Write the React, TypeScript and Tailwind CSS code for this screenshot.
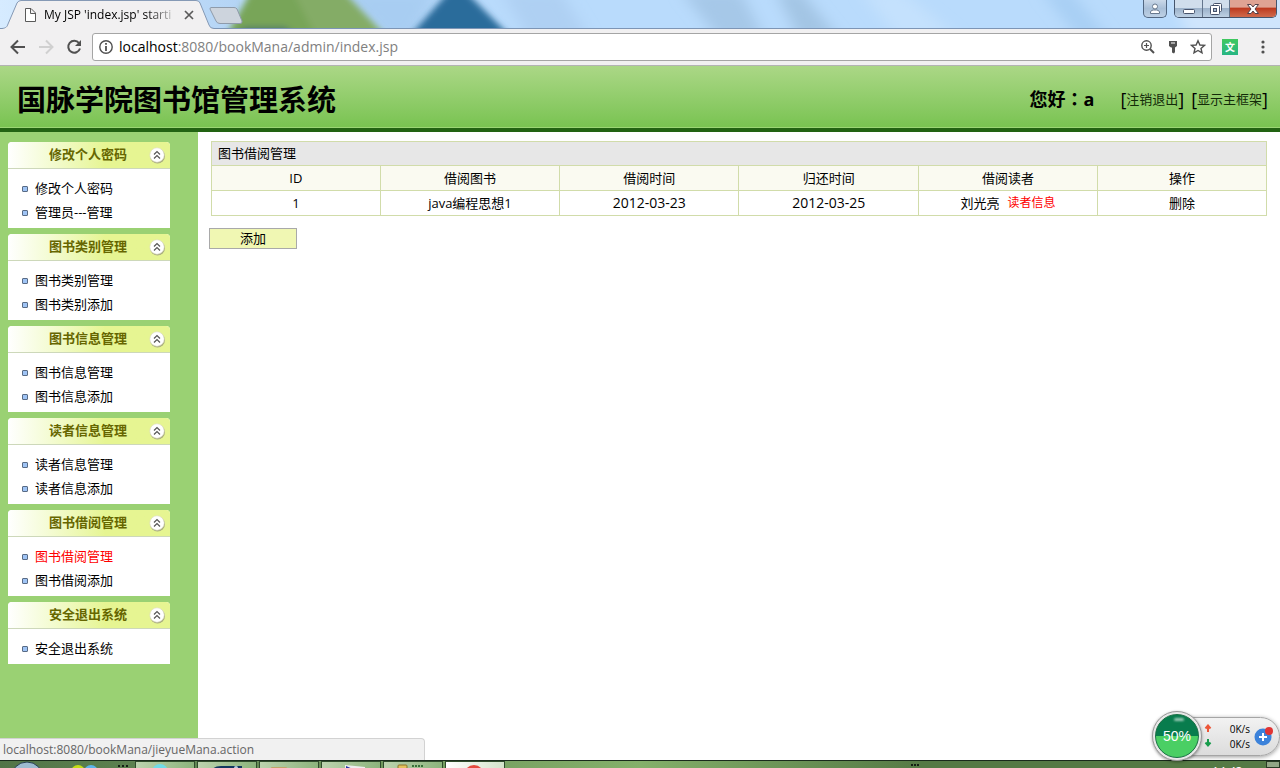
import { MouseEvent, ReactNode } from "react";

const groups = [
  { title: "修改个人密码", items: ["修改个人密码", "管理员---管理"] },
  { title: "图书类别管理", items: ["图书类别管理", "图书类别添加"] },
  { title: "图书信息管理", items: ["图书信息管理", "图书信息添加"] },
  { title: "读者信息管理", items: ["读者信息管理", "读者信息添加"] },
  { title: "图书借阅管理", items: ["图书借阅管理", "图书借阅添加"], active: 0 },
  { title: "安全退出系统", items: ["安全退出系统"] },
];

const stay = (e: MouseEvent) => e.preventDefault();

function Link({ children, className }: { children: ReactNode; className?: string }) {
  return (
    <a href="#" onClick={stay} className={className}>
      {children}
    </a>
  );
}

function TabStrip() {
  return (
    <div className="relative h-[29px] shrink-0 overflow-hidden bg-[#b9dbfc]">
      <svg className="absolute inset-0 h-full w-full" preserveAspectRatio="xMinYMin slice" aria-hidden="true">
        <defs>
          <filter id="soft" x="-40%" y="-50%" width="180%" height="200%">
            <feGaussianBlur stdDeviation="7" />
          </filter>
          <filter id="soft2" x="-20%" y="-50%" width="140%" height="200%">
            <feGaussianBlur stdDeviation="3" />
          </filter>
          <linearGradient id="leftglow" x1="0" x2="1">
            <stop offset="0" stopColor="#d6ebff" />
            <stop offset="1" stopColor="#b4d4f5" />
          </linearGradient>
        </defs>
        <rect width="240" height="29" fill="url(#leftglow)" />
        <g filter="url(#soft)">
          <path d="M330-10H440L410 40H390Z" fill="#a8cdf2" />
          <path d="M680-10H740L765 40H720Z" fill="#a6c8e8" />
          <path d="M775-10H800L840 40H800Z" fill="#a3c5e4" />
          <path d="M500-10H560L590 40H530Z" fill="#afd0f3" />
          <path d="M860-10H900L960 40H900Z" fill="#c4e1fd" />
          <path d="M1040-10H1070L1110 40H1080Z" fill="#a8cff4" />
          <path d="M1170-10H1300V40H1190Z" fill="#cfe5fc" />
        </g>
        <g filter="url(#soft2)">
          <path d="M252-10H342L390 40H224Z" fill="#84ac66" />
          <path d="M252-10H292L318 40H224Z" fill="#78a558" />
          <path d="M236 32L246 27H285L292 32V36H236Z" fill="#4f7866" />
          <path d="M452-12L408 38H512L462-12Z" fill="#2a6c9b" />
        </g>
      </svg>
      <div className="absolute inset-x-0 bottom-0 h-px bg-[#7d95b5]" />
      <svg className="absolute left-0 top-0" width="250" height="29" aria-hidden="true">
        <path d="M2 28.5C6 28 7 27 8 24L17 3Q18.500 .500 21 .500H196Q199 .500 200 3L209 25Q210 28.500 214 28.500V30H2Z" fill="#f1f0f1" stroke="#8599b5" />
        <rect x="5" y="28" width="206" height="1" fill="#f1f0f1" />
        <path d="M211 7.500H234Q236 7.500 237 9L242 21Q242.500 23.500 240 23.500H220Q217 23.500 216 21L210 9Q210 7.500 211 7.500Z" fill="#cdd4dd" stroke="#8f9baa" />
        <path d="M25.500 8.500H31L35.500 13V21.500H25.500ZM30.500 8.500V13.500H35.500" fill="#fff" stroke="#5a5a5a" />
        <path d="M185 11L193 19M193 11L185 19" stroke="#5a5a5a" strokeWidth="1.700" />
      </svg>
      <div className="absolute left-11 top-1.5 w-[135px] whitespace-nowrap bg-linear-to-r from-black from-75% to-transparent bg-clip-text text-[12px] leading-[18px] text-transparent">
        My JSP 'index.jsp' starti
      </div>
      <div className="absolute right-[3px] top-0 flex gap-[7px]">
        <button aria-label="用户" className="flex h-[18px] w-6 items-center justify-center rounded-b-[5px] border border-t-0 border-[#526781] bg-linear-to-b from-[#cbd9e9] via-[#a9bfd7] to-[#bed1e5]">
          <svg width="12" height="12" viewBox="0 0 12 12" fill="#fff" stroke="#68798e"><circle cx="6" cy="3.500" r="2.500" /><path d="M1.500 10.500V9Q2 7 4.500 7H7.500Q10 7 10.500 9V10.500Z" /></svg>
        </button>
        <div className="flex h-[18px] overflow-hidden rounded-b-[5px] border border-t-0 border-[#45556c]">
          <button aria-label="最小化" className="flex w-7 items-center justify-center border-r border-[#63758c] bg-linear-to-b from-[#d0deec] from-45% via-[#9cb2ca] via-50% to-[#bdd0e3]">
            <svg width="14" height="14"><rect x="1.500" y="7.500" width="11" height="4" rx="1" fill="#fff" stroke="#47536b" /></svg>
          </button>
          <button aria-label="还原" className="flex w-[27px] items-center justify-center border-r border-[#63758c] bg-linear-to-b from-[#d0deec] from-45% via-[#9cb2ca] via-50% to-[#bdd0e3]">
            <svg width="14" height="14" fill="#fff" stroke="#47536b"><rect x="4.500" y="1.500" width="8" height="8" rx="1" /><rect x="1.500" y="3.500" width="9" height="9" rx="1" /><rect x="4.500" y="6.500" width="3" height="3" fill="#a9bbd0" /></svg>
          </button>
          <button aria-label="关闭" className="flex w-[46px] items-center justify-center bg-linear-to-b from-[#dfa393] from-40% via-[#bd3b20] via-50% to-[#d06a4c]">
            <svg width="14" height="14"><path d="M1.500 2.500H5L7 5L9 2.500H12.500L9 7L12.500 11.500H9L7 9L5 11.500H1.500L5 7Z" fill="#fff" stroke="#524049" /></svg>
          </button>
        </div>
      </div>
    </div>
  );
}

function Toolbar() {
  return (
    <div className="flex h-[37px] shrink-0 items-center border-b border-[#b3b3b3] bg-[#f1f0f1] pl-2.5 pr-2 pb-px">
      <div className="flex items-center gap-3">
        <button aria-label="后退"><svg width="16" height="16" fill="none" stroke="#505050" strokeWidth="2"><path d="M15 8H2M8 1.500L1.500 8L8 14.500" /></svg></button>
        <button aria-label="前进"><svg width="16" height="16" fill="none" stroke="#d0d0d0" strokeWidth="2"><path d="M1 8H14M8 1.500L14.500 8L8 14.500" /></svg></button>
        <button aria-label="重新加载"><svg width="16" height="16" fill="none" stroke="#505050" strokeWidth="2"><path d="M13 4A6 6 0 1 0 14 9.500" /><path d="M15 1V7H9Z" fill="#505050" stroke="none" /></svg></button>
      </div>
      <div className="ml-2.5 flex h-7 flex-1 items-center rounded-[3px] border border-[#a5a5a5] bg-white pl-1.5 pr-[5px]">
        <svg className="shrink-0" width="14" height="14" fill="none" stroke="#505050"><circle cx="7" cy="7" r="6.200" strokeWidth="1.400" /><path d="M7 6V11M7 3V4.800" strokeWidth="1.800" /></svg>
        <div className="ml-1.5 flex-1 text-[14px] leading-5 text-[#808080]">
          <span className="text-black">localhost</span>:8080/bookMana/admin/index.jsp
        </div>
        <div className="flex items-center gap-[10px]">
          <button aria-label="缩放"><svg width="16" height="16" fill="none" stroke="#505050" strokeWidth="1.400"><circle cx="6.500" cy="6.500" r="4.700" /><path d="M10 10L14 14" strokeWidth="2" /><path d="M4 6.500H9M6.500 4V9" strokeWidth="1.200" /></svg></button>
          <button aria-label="密钥"><svg width="14" height="14" fill="#505050"><path d="M3 1H11V6L9 7.500V12L8 13.500L6 12.500V7.500H5L3 6Z" /><rect x="5" y="2.500" width="4" height="1" fill="#fff" /></svg></button>
          <button aria-label="收藏"><svg width="16" height="16" viewBox="0 0 16 16" fill="none" stroke="#505050" strokeWidth="1.400"><path d="M8 1.800L9.900 6L14.400 6.400L11 9.400L12 13.800L8 11.500L4 13.800L5 9.400L1.600 6.400L6.100 6Z" /></svg></button>
        </div>
      </div>
      <button className="ml-2.5 flex size-4 items-center justify-center bg-linear-to-b from-[#3fc85e] to-[#27b583] text-[10px] font-bold leading-4 text-white">文</button>
      <button aria-label="菜单" className="ml-[22px]"><svg width="6" height="14" fill="#505050"><circle cx="3" cy="2" r="1.600" /><circle cx="3" cy="7" r="1.600" /><circle cx="3" cy="12" r="1.600" /></svg></button>
      <span className="w-1.5" />
    </div>
  );
}

function Header() {
  return (
    <header className="flex h-[66px] shrink-0 items-center justify-between border-b-4 border-[#226312] bg-linear-to-b from-[#abd786] to-[#78c350] pl-[17px] pr-3 shadow-[inset_0_-1px_0_#9bd574]">
      <h1 className="mt-1.5 text-[29px] font-bold leading-10">国脉学院图书馆管理系统</h1>
      <div className="mt-1 flex items-center whitespace-nowrap">
        <span className="mr-[26px] font-['Open_Sans','Noto_Sans_CJK_TC',sans-serif] text-[18px] font-bold">您好：a</span>
        <span className="mr-[7px] flex items-center text-[18px]">[<Link className="mt-0.5 text-[13px] text-[#132b08]">注销退出</Link>]</span>
        <span className="flex items-center text-[18px]">[<Link className="mt-0.5 text-[13px] text-[#132b08]">显示主框架</Link>]</span>
      </div>
    </header>
  );
}

function Sidebar() {
  return (
    <nav className="flex w-[198px] shrink-0 flex-col gap-1.5 bg-[#9ad173] pl-2 pr-7 pt-2.5">
      {groups.map((g) => (
        <section key={g.title} className="rounded-t-[4px] bg-white pb-[3px]">
          <h2 className="mb-[7px] flex h-[27px] items-center rounded-t-[4px] border-b border-[#cdd8ba] bg-linear-to-r from-white to-[#e6f592] to-60% pl-[41px] pr-1 text-[13px] font-bold text-[#666600]">
            <span className="flex-1">{g.title}</span>
            <button aria-label="折叠">
              <svg width="18" height="18">
                <circle cx="9.500" cy="10" r="7.500" fill="#a9ad80" />
                <circle cx="9" cy="9" r="7.200" fill="#fff" stroke="#dddcc4" strokeWidth=".600" />
                <path d="M6 8.500L9 5.500L12 8.500M6 12.500L9 9.500L12 12.500" fill="none" stroke="#555" strokeWidth="1.200" />
              </svg>
            </button>
          </h2>
          <ul className="pt-px">
            {g.items.map((item, i) => (
              <li key={item} className="flex h-6 items-center gap-[7px] pl-3.5 text-[13px]">
                <span className="size-1.5 rounded-[1px] border border-[#596b85] bg-[#9fc4f5]" />
                <Link className={g.active === i ? "text-[#ff0000]" : "text-black"}>{item}</Link>
              </li>
            ))}
          </ul>
        </section>
      ))}
    </nav>
  );
}

function Content() {
  const cell = "border border-[#d1dcaa] p-0 font-normal";
  return (
    <main className="min-w-0 flex-1 bg-white pl-[11px] pr-[13px] pt-[9px]">
      <div className="pl-0.5">
        <table className="w-full table-fixed border-collapse text-center text-[13px] leading-6">
          <colgroup>
            <col className="w-[16%]" />
            <col className="w-[17%]" />
            <col className="w-[17%]" />
            <col className="w-[17%]" />
            <col className="w-[17%]" />
            <col className="w-[16%]" />
          </colgroup>
          <tbody>
            <tr className="h-6 bg-[#e7e7e7]">
              <td colSpan={6} className={`${cell} pl-1.5! text-left leading-[23px]!`}>图书借阅管理</td>
            </tr>
            <tr className="h-[25px] bg-[#fafaf1]">
              {["ID", "借阅图书", "借阅时间", "归还时间", "借阅读者", "操作"].map((h) => (
                <th key={h} scope="col" className={cell}>{h}</th>
              ))}
            </tr>
            <tr className="h-[25px]">
              <td className={cell}>1</td>
              <td className={cell}>java编程思想1</td>
              <td className={`${cell} text-[14px]`}>2012-03-23</td>
              <td className={`${cell} text-[14px]`}>2012-03-25</td>
              <td className={cell}>
                <span className="inline-flex items-center gap-2">
                  刘光亮 <Link className="text-[12px] text-[#ff0000]">读者信息</Link>
                </span>
              </td>
              <td className={cell}><Link>删除</Link></td>
            </tr>
          </tbody>
        </table>
      </div>
      <button className="mt-3 flex h-[21px] w-[88px] items-center justify-center border border-[#a9a9a9] bg-[#f0f7b3] text-[13px]">添加</button>
    </main>
  );
}

function SpeedWidget() {
  return (
    <div className="absolute bottom-[7px] right-0 flex h-[50px] w-[128px] items-center">
      <div className="absolute right-0 h-[39px] w-[100px] rounded-r-full border border-[#a5a5a5] bg-linear-to-b from-[#f2f2f2] to-[#dcdcdc] shadow-[0_1px_4px_#0006]" />
      <div className="relative flex size-[50px] shrink-0 items-center justify-center rounded-full border border-[#999] bg-[#e8e8e8] shadow-[0_1px_3px_#0006]">
        <div className="flex size-11 items-center justify-center rounded-full border border-[#197044] bg-linear-to-b from-[#087c4d] from-50% to-[#4acf64] to-50% font-['Liberation_Sans',sans-serif] text-[14px] text-white">50%</div>
        <span className="absolute left-[21px] top-1.5 h-[3px] w-2.5 rounded-full bg-white/60 blur-[1px]" />
      </div>
      <svg className="relative ml-0.5" width="8" height="24" fill="none" strokeWidth="2"><path d="M4 8V2M1.500 4.500L4 1.500L6.500 4.500" stroke="#ed5638" /><path d="M4 15V21M1.500 18.500L4 21.500L6.500 18.500" stroke="#179b4b" /></svg>
      <div className="relative mt-0.5 flex flex-1 flex-col text-right text-[10px] leading-[15px] text-black">
        <span>0K/s</span>
        <span>0K/s</span>
      </div>
      <svg className="relative ml-1 mr-1.5" width="20" height="22"><circle cx="9" cy="12" r="8.500" fill="#3c82da" /><path d="M9 8V16M5 12H13" stroke="#fff" strokeWidth="2" /><circle cx="15" cy="6" r="4" fill="#e03434" /></svg>
    </div>
  );
}

function Taskbar() {
  const slot = "relative h-2 w-[60px] overflow-hidden border-x border-t border-[#2f4c2b] bg-linear-to-r from-[#bcd3ae] to-[#8cb47c]";
  return (
    <footer className="flex h-2 shrink-0 overflow-hidden border-t border-[#1a2b1c] bg-linear-to-r from-[#527548] via-[#84b06a] via-50% to-[#557a45] to-72%">
      <svg className="shrink-0" width="135" height="7">
        <circle cx="27" cy="17" r="16" fill="#9dbbd0" stroke="#263e50" />
        <circle cx="78" cy="11" r="7" fill="#c5dd14" /><circle cx="91" cy="11" r="7" fill="#5cb4eb" />
        <path d="M118 5H120M122 5H124M126 5H128" stroke="#152014" strokeWidth="2" />
      </svg>
      <div className="flex gap-0.5">
        <div className={slot}><svg width="56" height="7"><circle cx="24" cy="10" r="8" fill="#70dce8" /></svg></div>
        <div className={slot}><svg width="56" height="7"><path d="M14 8Q16 4 23 4H44V8Z" fill="#12375e" /><circle cx="38" cy="6" r="2" fill="#b9cde0" /></svg></div>
        <div className={slot}><svg width="56" height="7"><rect x="11" y="5" width="16" height="3" rx="1" fill="#c0a568" /></svg></div>
        <div className={slot}><svg width="56" height="7"><path d="M23 3L43 5V8H23Z" fill="#eee" /><path d="M24 4L33 8H24Z" fill="#2733a5" /></svg></div>
        <div className={slot}><svg width="56" height="7"><rect x="14" y="3" width="9" height="5" rx="1" fill="#e3c15b" stroke="#8c7229" /><path d="M28 4H39" stroke="#397139" strokeWidth="2" strokeDasharray="2 1" /></svg></div>
        <div className="h-2 w-[60px] border border-[#2f4c2b] bg-linear-to-r from-white to-[#d3e3ca]"><svg width="56" height="7"><circle cx="28" cy="13" r="10" fill="#e44b3e" /></svg></div>
      </div>
      <div className="flex flex-1 justify-end">
        <svg width="9" height="7"><path d="M0 4H2M3 4H5M6 4H8" stroke="#152014" strokeWidth="2" /></svg>
        <span className="ml-[292px] w-[53px] text-[12px] leading-[22px] text-white">14:43</span>
        <span className="ml-px w-[14px] border border-[#283b24] bg-[#91a685]" />
      </div>
    </footer>
  );
}

export default function App() {
  return (
    <div className="relative flex h-screen flex-col overflow-hidden bg-white font-['Open_Sans','Noto_Sans_CJK_SC',sans-serif] text-black">
      <TabStrip />
      <Toolbar />
      <Header />
      <div className="relative flex min-h-0 flex-1">
        <Sidebar />
        <Content />
        <div className="absolute bottom-0 left-0 h-[22px] w-[425px] rounded-tr-[4px] border-r border-t border-[#d2d2d2] bg-[#f1f1f1] pl-[3px] text-[12px] leading-[21px] text-[#666]">
          localhost:8080/bookMana/jieyueMana.action
        </div>
      </div>
      <Taskbar />
      <SpeedWidget />
    </div>
  );
}
